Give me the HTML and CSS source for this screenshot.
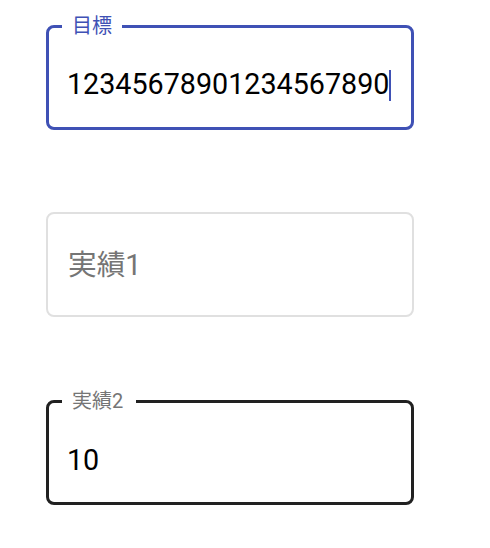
FILE: index.html
```html
<!DOCTYPE html>
<html lang="ja">
<head>
<meta charset="utf-8">
<title>Form</title>
<link rel="stylesheet" href="styles.css">
</head>
<body>
<main class="form">
  <div class="field field--focused">
    <span class="notch">目標</span>
    <div class="value">12345678901234567890<span class="caret"></span></div>
  </div>
  <div class="field field--empty">
    <div class="placeholder">実績1</div>
  </div>
  <div class="field field--filled">
    <span class="notch">実績2</span>
    <div class="value">10</div>
  </div>
</main>
</body>
</html>
```

FILE: styles.css
```css
body {
  margin: 0;
  background: #fff;
  font-family: Roboto, "Noto Sans CJK JP", sans-serif;
}

.form {
  display: flex;
  flex-direction: column;
  gap: 82px;
  padding: 25px 0 0 46px;
}

.field {
  box-sizing: border-box;
  width: 368px;
  height: 105px;
  border: 3px solid #212121;
  border-radius: 8px;
  display: flex;
  flex-direction: column;
  align-items: flex-start;
}

.field--focused {
  border-color: #3f51b5;
}

.field--empty {
  border: 2px solid #e0e0e0;
  margin-bottom: 1px;
}

.notch {
  margin: -13px 0 0 13px;
  padding: 0 10px;
  height: 23px;
  background: #fff;
  font-size: 20px;
  line-height: 23px;
  color: #757575;
  white-space: nowrap;
}

.field--focused .notch {
  color: #3f51b5;
}

.field--filled .notch {
  padding-right: 13px;
}

.value {
  margin: 29px 0 0 18px;
  font-size: 28.7px;
  line-height: 34px;
  color: #000;
  white-space: nowrap;
}

.field--filled .value {
  margin-top: 30px;
}

.placeholder {
  margin: 34px 0 0 20px;
  font-size: 28.7px;
  line-height: 34px;
  color: #757575;
  white-space: nowrap;
}

.caret {
  display: inline-block;
  width: 2px;
  height: 31px;
  background: #3f51b5;
  vertical-align: -7px;
}
```
